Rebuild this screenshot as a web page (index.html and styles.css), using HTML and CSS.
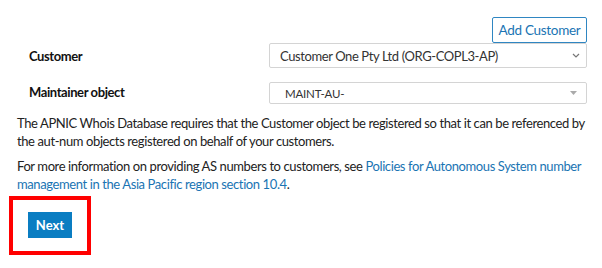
FILE: index.html
```html
<!DOCTYPE html>
<html>
<head>
  <meta charset="UTF-8">
  <title>Customer</title>
  <link rel="stylesheet" href="styles.css">
</head>
<body>
  <div class="page">
    <!-- Toolbar -->
    <div class="toolbar">
      <button class="btn-outline">Add Customer</button>
    </div>

    <!-- Customer -->
    <div class="form-row first">
      <label class="form-label">Customer</label>
      <div class="select">
        <span class="select-text">Customer One Pty Ltd (ORG-COPL3-AP)</span>
        <svg class="chevron" width="8" height="5" viewBox="0 0 8 5"><path d="M1 1 L4 4 L7 1" fill="none" stroke="#777" stroke-width="1.2"/></svg>
      </div>
    </div>

    <!-- Maintainer -->
    <div class="form-row second">
      <label class="form-label">Maintainer object</label>
      <div class="select select-small">
        <span class="select-text">MAINT-AU-</span>
        <svg class="caret" width="7" height="4" viewBox="0 0 7 4"><path d="M0 0 L7 0 L3.5 4 Z" fill="#aaa"/></svg>
      </div>
    </div>

    <p class="info first-info">The APNIC Whois Database requires that the Customer object be registered so that it can be referenced by the aut-num objects registered on behalf of your customers.</p>
    <p class="info">For more information on providing AS numbers to customers, see <a href="#">Policies for Autonomous System number management in the Asia Pacific region section 10.4</a>.</p>

    <div class="highlight">
      <button class="btn-primary">Next</button>
    </div>
  </div>
</body>
</html>
```

FILE: styles.css
```css
* { box-sizing: border-box; }
body {
  margin: 0;
  font-family: Lato, "Open Sans", sans-serif;
  font-size: 13px;
  letter-spacing: -0.4px;
  color: #222;
  background: #fff;
}
.page {
  padding: 17px 15px 0 17px;
}
.toolbar {
  display: flex;
  justify-content: flex-end;
}
.btn-outline {
  width: 95px;
  height: 26px;
  padding: 0;
  font-family: inherit;
  font-size: 13.5px;
  letter-spacing: -0.3px;
  color: #1a74b3;
  background: #fff;
  border: 1px solid #2f86c2;
  border-radius: 2px;
}
.form-row {
  display: flex;
  align-items: center;
  padding-left: 12px;
}
.form-row.second { margin-top: 14px; }
.form-row.second .form-label { margin-top: -3px; }
.form-label {
  width: 240px;
  font-weight: bold;
  color: #111;
}
.select {
  flex: 1;
  height: 25px;
  display: flex;
  align-items: center;
  padding: 0 6px 0 10px;
  border: 1px solid #d4d4d4;
  border-radius: 2px;
  color: #333;
}
.select-text { flex: 1; }
.select-small {
  height: 22px;
  padding-left: 15px;
  padding-right: 9px;
  font-size: 11.5px;
  letter-spacing: -0.2px;
}
.info {
  margin: 8px 0 0;
  line-height: 18px;
}
.info.first-info { margin-top: 10px; }
.info + .info { line-height: 17.5px; }
a {
  color: #1a74b3;
  text-decoration: none;
}
.highlight {
  width: 82px;
  margin: 3px 0 0 -8px;
  padding: 12px 15px 13px 15px;
  border: 4px solid #f00;
}
.btn-primary {
  display: block;
  height: 26px;
  width: 44px;
  padding: 0;
  font-family: inherit;
  font-size: 13px;
  font-weight: bold;
  letter-spacing: 0;
  color: #fff;
  background: #0a7dc2;
  border: 0;
  border-radius: 0;
}
```
